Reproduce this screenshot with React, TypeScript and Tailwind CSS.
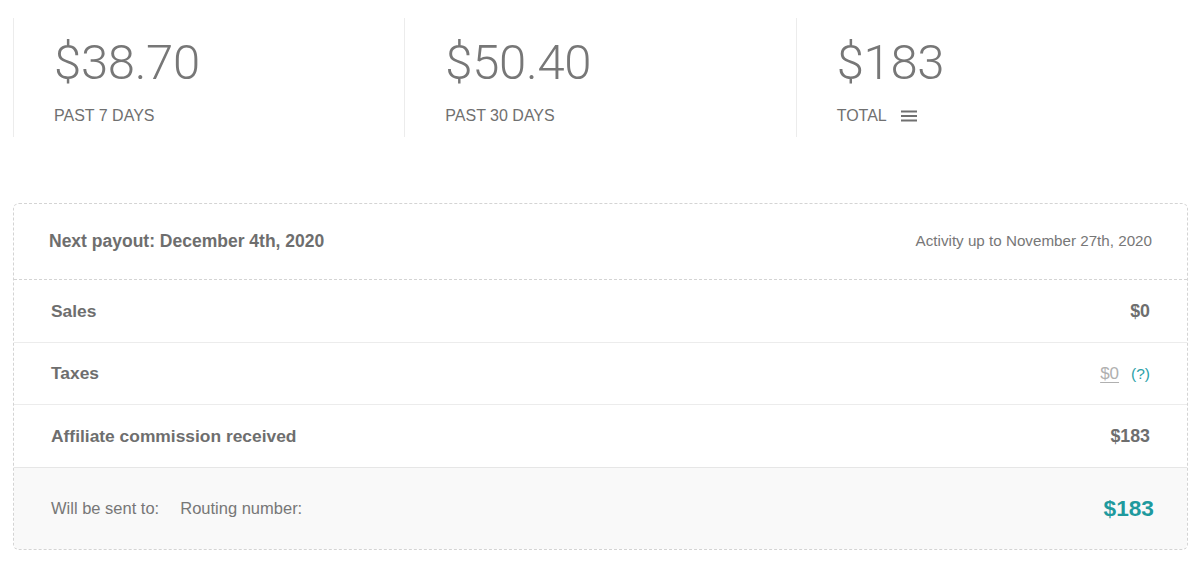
import React from 'react';

const STATS = [
  { value: '$38.70', label: 'PAST 7 DAYS' },
  { value: '$50.40', label: 'PAST 30 DAYS' },
  { value: '$183', label: 'TOTAL', menu: true },
];

function MenuIcon() {
  return (
    <svg width="16" height="12" viewBox="0 0 16 12" className="ml-[14px]">
      <rect x="0" y="0.5" width="16" height="2" fill="#707070" />
      <rect x="0" y="5" width="16" height="2" fill="#707070" />
      <rect x="0" y="9.5" width="16" height="2" fill="#707070" />
    </svg>
  );
}

export default function App() {
  return (
    <div className="min-h-[563px] bg-white px-[13px] pt-[18px] text-[#757575]" style={{ fontFamily: '"Liberation Sans", Arial, sans-serif' }}>
      {/* Stats */}
      <div className="grid grid-cols-3">
        {STATS.map(s => (
          <div key={s.label} className="h-[119px] border-l border-[#ececec] pl-[40px] pt-[17px]">
            <div className="text-[49px] leading-[56px] font-light tracking-[-0.3px] text-[#777]" style={{ fontFamily: 'Roboto, "Liberation Sans", sans-serif' }}>
              {s.value}
            </div>
            <div className="mt-[15px] flex items-center text-[16px] leading-[20px] text-[#707070]">
              {s.label}
              {s.menu && <MenuIcon />}
            </div>
          </div>
        ))}
      </div>

      {/* Payout card */}
      <div className="mt-[66px] mr-[-1px] overflow-hidden rounded-[6px] border border-dashed border-[#d4d4d4]">
        <div className="flex h-[76px] items-center justify-between border-b border-dashed border-[#d4d4d4] pl-[35px] pr-[35px]">
          <span className="text-[17.5px] font-bold text-[#6e6e6e]">Next payout: December 4th, 2020</span>
          <span className="text-[15.2px] text-[#777]">Activity up to November 27th, 2020</span>
        </div>

        <div className="flex h-[63px] items-center justify-between border-b border-[#ececec] pl-[37px] pr-[37px]">
          <span className="text-[17.4px] font-bold text-[#6e6e6e]">Sales</span>
          <span className="text-[17.8px] font-bold text-[#6e6e6e]">$0</span>
        </div>

        <div className="flex h-[62px] items-center justify-between border-b border-[#ececec] pl-[37px] pr-[37px]">
          <span className="text-[17.4px] font-bold text-[#6e6e6e]">Taxes</span>
          <span className="flex items-center text-[17px]">
            <span className="text-[#b0b0b0] underline underline-offset-[3px]">$0</span>
            <span className="ml-[12px] text-[15.5px] text-[#2aa1a8]">(?)</span>
          </span>
        </div>

        <div className="flex h-[63px] items-center justify-between border-b border-[#e6e6e6] pl-[37px] pr-[37px]">
          <span className="text-[17.4px] font-bold text-[#6e6e6e]">Affiliate commission received</span>
          <span className="text-[17.8px] font-bold text-[#6e6e6e]">$183</span>
        </div>

        <div className="flex h-[81px] items-center justify-between bg-[#f9f9f9] pl-[37px] pr-[33px]">
          <span className="text-[16.5px] text-[#777]">
            Will be sent to:<span className="ml-[21px]">Routing number:</span>
          </span>
          <span className="text-[22.7px] font-bold text-[#1f9a9e]">$183</span>
        </div>
      </div>
    </div>
  );
}
